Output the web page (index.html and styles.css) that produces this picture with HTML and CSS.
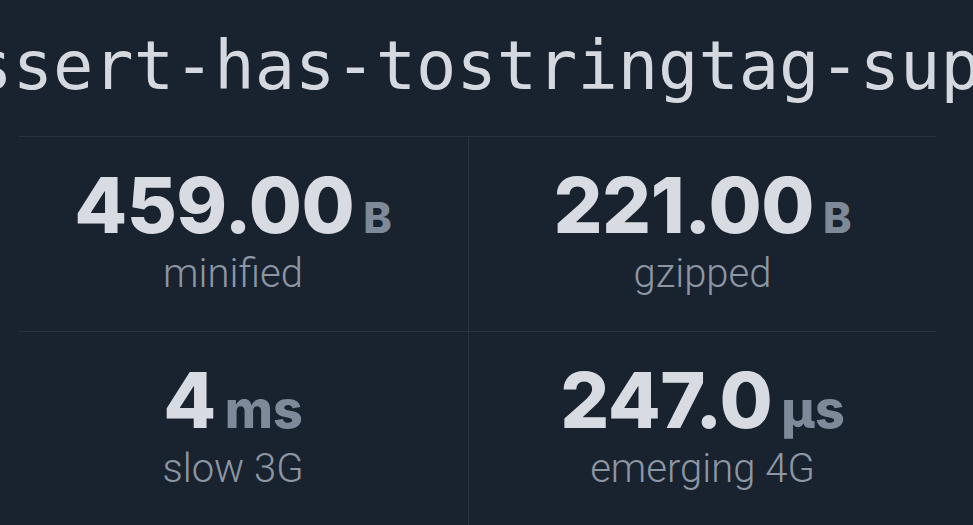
FILE: index.html
```html
<!DOCTYPE html>
<html lang="en">
<head>
<meta charset="utf-8">
<title>assert-has-tostringtag-support</title>
<link rel="stylesheet" href="styles.css">
</head>
<body>
<main class="page">
  <h1 class="title">assert-has-tostringtag-support</h1>
  <section class="stats">
    <div class="stat stat-left">
      <div class="value"><span class="num">459.00</span><span class="unit unit-caps">B</span></div>
      <div class="label">minified</div>
    </div>
    <div class="stat stat-right">
      <div class="value"><span class="num">221.00</span><span class="unit unit-caps">B</span></div>
      <div class="label">gzipped</div>
    </div>
    <div class="stat stat-left">
      <div class="value"><span class="num">4</span><span class="unit">ms</span></div>
      <div class="label">slow 3G</div>
    </div>
    <div class="stat stat-right">
      <div class="value"><span class="num">247.0</span><span class="unit">µs</span></div>
      <div class="label">emerging 4G</div>
    </div>
  </section>
</main>
</body>
</html>
```

FILE: styles.css
```css
html, body {
  margin: 0;
  padding: 0;
  background: #19222f;
}

body {
  width: 973px;
  height: 525px;
  overflow: hidden;
}

.page {
  display: flex;
  flex-direction: column;
}

.title {
  margin: 0 0 0 -68px;
  padding-top: 27px;
  font-family: "DejaVu Sans Mono", "Liberation Mono", monospace;
  font-weight: 400;
  font-size: 67px;
  line-height: 78px;
  color: #d5d9df;
  white-space: nowrap;
  height: 109px;
}

.stats {
  margin-left: 19px;
  width: 917px;
  display: grid;
  grid-template-columns: 449px 468px;
  grid-auto-rows: 195px;
}

.stat {
  border-top: 1px solid #2a3441;
  display: flex;
  flex-direction: column;
  align-items: center;
  padding-top: 30px;
  box-sizing: border-box;
}

.stat-left {
  padding-right: 21px;
}

.stat-right {
  border-left: 1px solid #2a3441;
}

.value {
  display: flex;
  align-items: baseline;
  gap: 9px;
}

.num {
  font-family: Inter, "Liberation Sans", sans-serif;
  font-weight: 800;
  font-size: 77px;
  line-height: 1;
  letter-spacing: -0.5px;
  color: #d8dbe1;
}

.unit {
  font-family: Inter, "Liberation Sans", sans-serif;
  font-weight: 800;
  font-size: 52px;
  line-height: 1;
  color: #7e8a9a;
}

.unit-caps {
  font-size: 43px;
}

.label {
  margin-top: 10px;
  font-family: Roboto, "Liberation Sans", sans-serif;
  font-weight: 300;
  font-size: 40px;
  line-height: 1;
  color: #8d97a4;
}
```
